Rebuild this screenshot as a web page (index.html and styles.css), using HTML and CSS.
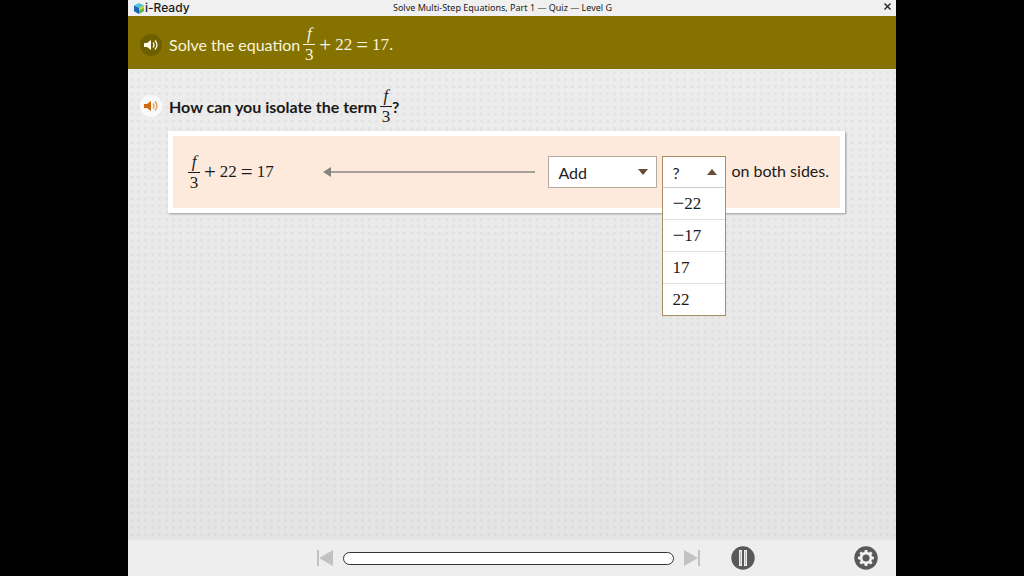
FILE: index.html
```html
<!DOCTYPE html>
<html lang="en">
<head>
    <meta charset="UTF-8">
    <meta name="viewport" content="width=device-width, initial-scale=1.0">
    <title>Solve Multi-Step Equations, Part 1 — Quiz — Level G</title>
    <link rel="stylesheet" href="styles.css">
</head>
<body>
    <div class="player">
        <header class="top-bar">
            <div class="logo">
                <svg width="10" height="11" viewBox="0 0 10 11" aria-hidden="true">
                    <path d="M5 0L10 2.5L5 5L0 2.5Z" fill="#4bc4dc"/>
                    <path d="M0 2.5L5 5V11L0 8.3Z" fill="#1767b5"/>
                    <path d="M10 2.5L5 5V11L10 8.3Z" fill="#62b848"/>
                    <path d="M5 5L10 2.5V5L5 7.5Z" fill="#c3d646"/>
                </svg>
                <span>i-Ready</span>
            </div>
            <div class="lesson-title">Solve Multi-Step Equations, Part 1 — Quiz — Level G</div>
            <button type="button" class="close-btn" aria-label="Close">
                <svg width="7" height="7" viewBox="0 0 7 7"><path d="M0.5 0.5L6.5 6.5M6.5 0.5L0.5 6.5" stroke="#222" stroke-width="1.4"/></svg>
            </button>
        </header>

        <div class="prompt">
            <button type="button" class="audio-btn" aria-label="Read the problem aloud">
                <svg width="14" height="12" viewBox="0 0 14 12">
                    <path d="M0 4H3L7 1V11L3 8H0Z" fill="currentColor"/>
                    <path d="M9 3.5Q11 6 9 8.5M11 1.5Q15 6 11 10.5" fill="none" stroke="currentColor" stroke-width="1.3"/>
                </svg>
            </button>
            <p>Solve the equation</p>
            <span class="math"><span class="frac"><i>f</i><span>3</span></span><span class="op">+</span>22<span class="op">=</span>17.</span>
        </div>

        <main class="stage">
            <div class="question">
                <button type="button" class="audio-btn light" aria-label="Read the question aloud">
                    <svg width="14" height="12" viewBox="0 0 14 12">
                        <path d="M0 4H3L7 1V11L3 8H0Z" fill="currentColor"/>
                        <path d="M9 3.5Q11 6 9 8.5M11 1.5Q15 6 11 10.5" fill="none" stroke="#e0954f" stroke-width="1.3"/>
                    </svg>
                </button>
                <h1>How can you isolate the term</h1>
                <span class="math"><span class="frac"><i>f</i><span>3</span></span></span>
                <strong>?</strong>
            </div>

            <div class="card">
                <span class="math"><span class="frac"><i>f</i><span>3</span></span><span class="op">+</span>22<span class="op">=</span>17</span>
                <div class="arrow"></div>
                <div class="answer">
                    <select class="dropdown operation" aria-label="Operation">
                        <option>Add</option>
                        <option>Subtract</option>
                    </select>
                    <div class="number-picker">
                        <select class="dropdown open" aria-label="Number">
                            <option>?</option>
                        </select>
                        <ul class="options" role="listbox" aria-label="Number choices">
                            <li role="option"><span class="sign">−</span>22</li>
                            <li role="option"><span class="sign">−</span>17</li>
                            <li role="option">17</li>
                            <li role="option">22</li>
                        </ul>
                    </div>
                    <span class="suffix">on both sides.</span>
                </div>
            </div>
        </main>

        <footer class="controls">
            <button type="button" class="skip-btn" aria-label="Previous">
                <svg width="16" height="16" viewBox="0 0 16 16" fill="#c2c2c2"><path d="M0 0H2V16H0ZM16 0V16L2 8Z"/></svg>
            </button>
            <div class="progress" role="progressbar" aria-label="Progress"></div>
            <button type="button" class="skip-btn" aria-label="Next">
                <svg width="16" height="16" viewBox="0 0 16 16" fill="#c2c2c2"><path d="M14 0H16V16H14ZM0 0V16L14 8Z"/></svg>
            </button>
            <button type="button" class="pause-btn" aria-label="Pause">
                <svg width="24" height="24" viewBox="0 0 24 24">
                    <circle cx="12" cy="12" r="11.7" fill="#595959"/>
                    <path d="M8 4H11V20H8ZM13 4H16V20H13Z" fill="#eee"/>
                    <path d="M9.5 5.5V18.5M14.5 5.5V18.5" stroke="#aaa" stroke-width="0.8"/>
                </svg>
            </button>
            <button type="button" class="settings-btn" aria-label="Settings">
                <svg width="24" height="24" viewBox="0 0 24 24">
                    <circle cx="12" cy="12" r="11.7" fill="#595959"/>
                    <g fill="#f0f0f0">
                        <circle cx="12" cy="12" r="6.2"/>
                        <path id="tooth" d="M10.2 7L10.7 4H13.3L13.8 7Z"/>
                        <use href="#tooth" transform="rotate(45 12 12)"/>
                        <use href="#tooth" transform="rotate(90 12 12)"/>
                        <use href="#tooth" transform="rotate(135 12 12)"/>
                        <use href="#tooth" transform="rotate(180 12 12)"/>
                        <use href="#tooth" transform="rotate(225 12 12)"/>
                        <use href="#tooth" transform="rotate(270 12 12)"/>
                        <use href="#tooth" transform="rotate(315 12 12)"/>
                    </g>
                    <circle cx="12" cy="12" r="3.5" fill="#595959"/>
                </svg>
            </button>
        </footer>
    </div>
</body>
</html>
```
FILE: styles.css
```css
* {
    box-sizing: border-box;
}
body {
    margin: 0;
    background-color: #000;
    color: #1a1a1a;
    font-family: Lato, sans-serif;
    font-size: 16px;
}
h1, p, ul {
    margin: 0;
    padding: 0;
}
button {
    border: none;
    padding: 0;
    background: none;
    display: flex;
    align-items: center;
    justify-content: center;
    cursor: pointer;
}
/* 4:3 player, letterboxed in the window */
.player {
    height: 100vh;
    aspect-ratio: 4 / 3;
    max-width: 100%;
    margin: 0 auto;
    display: flex;
    flex-direction: column;
    background-color: #eee;
}
.top-bar {
    display: grid;
    grid-template-columns: 1fr auto 1fr;
    align-items: center;
    height: 16px;
    padding: 0 5px 0 6px;
    background-color: #f0f0f0;
}
.logo {
    display: flex;
    align-items: center;
    gap: 1px;
    font-family: Inter, sans-serif;
    font-size: 12px;
    font-weight: 500;
    line-height: 16px;
}
.lesson-title {
    font-family: "Noto Sans", sans-serif;
    font-size: 9px;
    line-height: 16px;
    padding-right: 20px;
}
.close-btn {
    align-self: start;
    justify-self: end;
    height: 13px;
}
.prompt {
    display: flex;
    align-items: center;
    height: 53px;
    padding: 4px 12px 0;
    background-color: #857200;
    color: #f8f5df;
}
.prompt .math,
.question .math {
    margin-left: 3px;
}
.audio-btn {
    width: 22px;
    height: 22px;
    margin-right: 7px;
    border-radius: 50%;
    background-color: #6d5e00;
    color: #fffbe6;
}
.audio-btn.light {
    background-color: #fafafa;
    color: #d0690f;
}
.stage {
    flex: 1;
    padding: 17px 51px 0 12px;
    background-color: #e6e6e6;
    background-image: radial-gradient(circle, rgba(0, 0, 0, 0.04) 1px, transparent 2px), linear-gradient(#ededed, #e4e4e4);
    background-size: 7px 7px, 100% 100%;
}
.question {
    display: flex;
    align-items: center;
    height: 40px;
}
.question h1 {
    font-size: 16px;
}
.math {
    display: flex;
    align-items: center;
    font-family: "Liberation Serif", serif;
    font-size: 17px;
    line-height: 20px;
}
.op {
    padding: 0 4px;
    font-size: 21px;
}
.frac {
    display: flex;
    flex-direction: column;
    align-items: center;
    width: 12px;
}
.frac i {
    width: 100%;
    text-align: center;
    border-bottom: 1px solid currentColor;
}
.card {
    display: flex;
    align-items: center;
    height: 82px;
    margin: 5px 0 0 28px;
    padding: 0 11px 0 15px;
    border: 5px solid #fff;
    background-color: #fdeadc;
    box-shadow: 1px 1px 2px #999;
}
.arrow {
    flex: 1;
    display: flex;
    align-items: center;
    margin: 0 13px 0 49px;
}
.arrow::before {
    content: "";
    border: 5px solid transparent;
    border-right: 8px solid #85857f;
    border-left: 0;
}
.arrow::after {
    content: "";
    flex: 1;
    height: 2px;
    background-color: #a6a198;
}
.answer {
    display: flex;
    align-items: center;
    gap: 5px;
}
.dropdown {
    appearance: none;
    display: block;
    width: 100%;
    height: 32px;
    padding: 0 9px;
    border: 1px solid #b5aaa0;
    border-radius: 0;
    background: #fff url("data:image/svg+xml,%3Csvg xmlns='http://www.w3.org/2000/svg' width='10' height='6'%3E%3Cpath d='M0 0H10L5 6Z' fill='%23694a35'/%3E%3C/svg%3E") no-repeat right 8px center;
    color: #222;
    font-family: inherit;
    font-size: 16px;
}
.operation {
    width: 109px;
}
.dropdown.open {
    border-color: #a98c66;
    border-bottom-color: #ccc;
    background-image: url("data:image/svg+xml,%3Csvg xmlns='http://www.w3.org/2000/svg' width='10' height='6'%3E%3Cpath d='M0 6H10L5 0Z' fill='%23694a35'/%3E%3C/svg%3E");
}
.number-picker {
    position: relative;
    width: 64px;
}
.options {
    position: absolute;
    top: 100%;
    left: 0;
    right: 0;
    list-style: none;
    border: 1px solid #a98c66;
    border-top: none;
    background-color: #fff;
    font-family: "Liberation Serif", serif;
    font-size: 17px;
}
.options li {
    display: flex;
    align-items: center;
    padding: 0 9px;
    line-height: 31px;
}
.options li + li {
    border-top: 1px solid #ddd;
}
.sign {
    font-size: 21px;
}
.suffix {
    padding-bottom: 4px;
}
.controls {
    display: flex;
    align-items: center;
    height: 36px;
    padding: 0 18px 0 189px;
    background-color: #eee;
}
.progress {
    flex: 1;
    height: 13px;
    margin: 0 10px;
    border: 1px solid #333;
    border-radius: 7px;
    background-color: #fff;
}
.pause-btn {
    margin-left: 31px;
}
.settings-btn {
    margin-left: 99px;
}
```
